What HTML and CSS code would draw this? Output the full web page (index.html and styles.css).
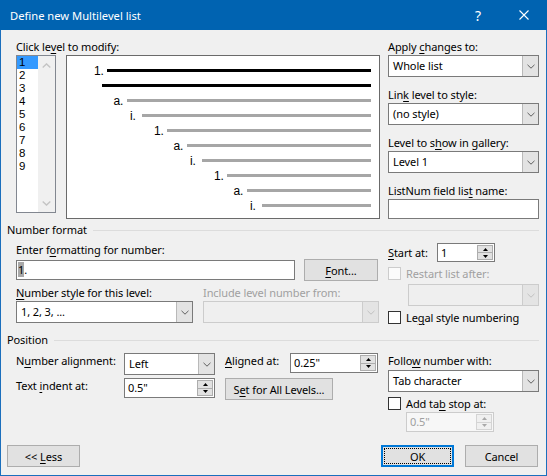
FILE: index.html
```html
<!DOCTYPE html>
<html>
<head>
<meta charset="utf-8">
<title>Define new Multilevel list</title>
<link rel="stylesheet" href="styles.css">
</head>
<body>
<div class="window">
  <div class="titlebar">
    <span class="title">Define new Multilevel list</span>
    <span class="tb-btn help">?</span>
    <span class="tb-btn close"><svg width="10" height="10" viewBox="0 0 10 10"><path d="M0.5 0.5L9.5 9.5M9.5 0.5L0.5 9.5" stroke="#fff" stroke-width="1.1" fill="none"/></svg></span>
  </div>
  <div class="body">
    <div class="top">
      <div class="top-left">
        <div class="lbl">Click le<u>v</u>el to modify:</div>
        <div class="top-row">
          <div class="listbox">
            <div class="items">
              <div class="item sel">1</div>
              <div class="item">2</div>
              <div class="item">3</div>
              <div class="item">4</div>
              <div class="item">5</div>
              <div class="item">6</div>
              <div class="item">7</div>
              <div class="item">8</div>
              <div class="item">9</div>
            </div>
            <div class="vscroll">
              <svg width="9" height="5" viewBox="0 0 9 5"><path d="M0.7 4.4L4.5 0.9L8.3 4.4" fill="none" stroke="#c4c4c4" stroke-width="1.4"/></svg>
              <svg width="9" height="5" viewBox="0 0 9 5"><path d="M0.7 0.6L4.5 4.1L8.3 0.6" fill="none" stroke="#c4c4c4" stroke-width="1.4"/></svg>
            </div>
          </div>
          <div class="preview">
            <svg width="312" height="162" viewBox="0 0 312 162">
              <g font-family="Liberation Sans, Arial, sans-serif" font-size="12" fill="#000">
                <text x="27" y="19">1.</text>
                <text x="46.5" y="49">a.</text>
                <text x="63" y="64">i.</text>
                <text x="87" y="79">1.</text>
                <text x="106.5" y="94">a.</text>
                <text x="123" y="109">i.</text>
                <text x="147" y="124">1.</text>
                <text x="166.5" y="139">a.</text>
                <text x="183" y="154">i.</text>
              </g>
              <rect x="40" y="13" width="264" height="3" fill="#000"/>
              <rect x="35" y="28" width="269" height="3" fill="#000"/>
              <g fill="#a6a6a6">
                <rect x="60" y="43" width="244" height="3"/>
                <rect x="75" y="58" width="229" height="3"/>
                <rect x="100" y="73" width="204" height="3"/>
                <rect x="120" y="88" width="184" height="3"/>
                <rect x="135" y="103" width="169" height="3"/>
                <rect x="160" y="118" width="144" height="3"/>
                <rect x="180" y="133" width="124" height="3"/>
                <rect x="195" y="148" width="109" height="3"/>
              </g>
            </svg>
          </div>
        </div>
      </div>
      <div class="side">
        <div class="lbl">Apply <u>c</u>hanges to:</div>
        <div class="combo"><span class="ctext">Whole list</span><span class="dd"><svg width="8" height="5" viewBox="0 0 8 5"><path d="M0.5 0.8L4 4.2L7.5 0.8" fill="none" stroke="#606060" stroke-width="1"/></svg></span></div>
        <div class="lbl mt10">Lin<u>k</u> level to style:</div>
        <div class="combo"><span class="ctext">(no style)</span><span class="dd"><svg width="8" height="5" viewBox="0 0 8 5"><path d="M0.5 0.8L4 4.2L7.5 0.8" fill="none" stroke="#606060" stroke-width="1"/></svg></span></div>
        <div class="lbl mt10">Level to s<u>h</u>ow in gallery:</div>
        <div class="combo"><span class="ctext">Level 1</span><span class="dd"><svg width="8" height="5" viewBox="0 0 8 5"><path d="M0.5 0.8L4 4.2L7.5 0.8" fill="none" stroke="#606060" stroke-width="1"/></svg></span></div>
        <div class="lbl mt10">ListNum field lis<u>t</u> name:</div>
        <div class="edit"></div>
      </div>
    </div>

    <div class="group"><span>Number format</span></div>
    <div class="sec">
      <div class="sec-left">
        <div class="lbl mt4">Enter f<u>o</u>rmatting for number:</div>
        <div class="row mt1">
          <div class="edit fmt"><span class="shade">1</span>.</div>
          <div class="btn font-btn"><span><u>F</u>ont...</span></div>
        </div>
        <div class="row mt4">
          <div class="lbl w187"><u>N</u>umber style for this level:</div>
          <div class="lbl dis-text">Include level number from:</div>
        </div>
        <div class="row">
          <div class="combo w177"><span class="ctext">1, 2, 3, ...</span><span class="dd"><svg width="8" height="5" viewBox="0 0 8 5"><path d="M0.5 0.8L4 4.2L7.5 0.8" fill="none" stroke="#606060" stroke-width="1"/></svg></span></div>
          <div class="combo dis w176"><span class="ctext"></span><span class="dd"><svg width="8" height="5" viewBox="0 0 8 5"><path d="M0.5 0.8L4 4.2L7.5 0.8" fill="none" stroke="#c0c0c0" stroke-width="1"/></svg></span></div>
        </div>
      </div>
      <div class="sec-right">
        <div class="row start">
          <span class="lbl start-lbl"><u>S</u>tart at:</span>
          <div class="spin w58"><span class="stext">1</span><span class="sbtns"><span><svg width="5" height="3" viewBox="0 0 5 3"><polygon points="0,3 2.5,0 5,3" fill="#000"/></svg></span><span><svg width="5" height="3" viewBox="0 0 5 3"><polygon points="0,0 2.5,3 5,0" fill="#000"/></svg></span></span></div>
        </div>
        <div class="check dis restart"><span class="cb"></span><span>Restart list after:</span></div>
        <div class="combo dis restart-combo"><span class="ctext"></span><span class="dd"><svg width="8" height="5" viewBox="0 0 8 5"><path d="M0.5 0.8L4 4.2L7.5 0.8" fill="none" stroke="#c0c0c0" stroke-width="1"/></svg></span></div>
        <div class="check legal"><span class="cb"></span><span>Le<u>g</u>al style numbering</span></div>
      </div>
    </div>

    <div class="group mt8"><span>Position</span></div>
    <div class="sec">
      <div class="sec-left">
        <div class="pos-grid">
          <div class="lbl">N<u>u</u>mber alignment:</div>
          <div class="combo"><span class="ctext">Left</span><span class="dd"><svg width="8" height="5" viewBox="0 0 8 5"><path d="M0.5 0.8L4 4.2L7.5 0.8" fill="none" stroke="#606060" stroke-width="1"/></svg></span></div>
          <div class="lbl pl10"><u>A</u>ligned at:</div>
          <div class="spin"><span class="stext">0.25"</span><span class="sbtns"><span><svg width="5" height="3" viewBox="0 0 5 3"><polygon points="0,3 2.5,0 5,3" fill="#000"/></svg></span><span><svg width="5" height="3" viewBox="0 0 5 3"><polygon points="0,0 2.5,3 5,0" fill="#000"/></svg></span></span></div>
          <div class="lbl">Text <u>i</u>ndent at:</div>
          <div class="spin"><span class="stext">0.5"</span><span class="sbtns"><span><svg width="5" height="3" viewBox="0 0 5 3"><polygon points="0,3 2.5,0 5,3" fill="#000"/></svg></span><span><svg width="5" height="3" viewBox="0 0 5 3"><polygon points="0,0 2.5,3 5,0" fill="#000"/></svg></span></span></div>
          <div class="btn setall"><span>S<u>e</u>t for All Levels...</span></div>
        </div>
      </div>
      <div class="sec-right pos-right">
        <div class="lbl">Follo<u>w</u> number with:</div>
        <div class="combo mt1"><span class="ctext">Tab character</span><span class="dd"><svg width="8" height="5" viewBox="0 0 8 5"><path d="M0.5 0.8L4 4.2L7.5 0.8" fill="none" stroke="#606060" stroke-width="1"/></svg></span></div>
        <div class="check addtab"><span class="cb"></span><span>Add ta<u>b</u> stop at:</span></div>
        <div class="spin spin-dis"><span class="stext">0.5"</span><span class="sbtns"><span><svg width="5" height="3" viewBox="0 0 5 3"><polygon points="0,3 2.5,0 5,3" fill="#a8a8a8"/></svg></span><span><svg width="5" height="3" viewBox="0 0 5 3"><polygon points="0,0 2.5,3 5,0" fill="#a8a8a8"/></svg></span></span></div>
      </div>
    </div>

    <div class="buttons">
      <div class="btn less"><span>&lt;&lt; <u>L</u>ess</span></div>
      <div class="btn ok"><span class="focus">OK</span></div>
      <div class="btn cancel"><span>Cancel</span></div>
    </div>
  </div>
</div>
</body>
</html>
```
FILE: styles.css
```css
* { box-sizing: border-box; }
html, body { margin: 0; padding: 0; }
body {
  width: 547px;
  height: 476px;
  overflow: hidden;
  background: #f0f0f0;
  font-family: "Noto Sans", "Open Sans", sans-serif;
  font-size: 11px;
  letter-spacing: -0.1px;
  color: #000;
}
u { text-underline-offset: 2px; }

.window {
  width: 547px;
  height: 476px;
  border: 1px solid #1b6fbd;
  border-top: none;
  display: flex;
  flex-direction: column;
  background: #f0f0f0;
}
.titlebar {
  flex: none;
  height: 30px;
  margin: 0 -1px;
  background: #0063b1;
  color: #fff;
  display: flex;
  align-items: center;
  padding-left: 10px;
}
.title { flex: 1; font-size: 11.2px; letter-spacing: 0; }
.tb-btn {
  width: 46px;
  height: 30px;
  display: flex;
  align-items: center;
  justify-content: center;
}
.help { font-size: 14px; }

.body {
  flex: 1;
  display: flex;
  flex-direction: column;
  padding: 9px 7px 8px 6px;
}

.lbl { height: 16px; line-height: 16px; white-space: nowrap; }
.mt1 { margin-top: 1px; }
.mt4 { margin-top: 4px; }
.mt10 { margin-top: 10px; }
.pl10 { padding-left: 10px; }

/* top area */
.top { display: flex; padding-left: 9px; }
.top-left { width: 364px; }
.top-row { display: flex; align-items: flex-start; }
.listbox {
  width: 40px;
  height: 158px;
  border: 1px solid #828790;
  background: #fff;
  display: flex;
}
.items { width: 21px; }
.item {
  height: 13px;
  line-height: 13px;
  padding-left: 2px;
  font-family: "Liberation Sans", Arial, sans-serif;
  font-size: 11.5px;
  letter-spacing: 0;
}
.item.sel { background: #3399ff; }
.vscroll {
  width: 17px;
  background: #f0f0f0;
  display: flex;
  flex-direction: column;
  justify-content: space-between;
  align-items: center;
  padding: 7px 0 6px;
}
.vscroll svg { display: block; }
.preview {
  margin-left: 10px;
  width: 314px;
  height: 164px;
  border: 1px solid #6a6a6a;
  background: #fff;
}
.preview svg { display: block; }

.side { margin-left: 8px; width: 151px; }

/* controls */
.combo {
  display: flex;
  height: 22px;
  border: 1px solid #7a7a7a;
  background: #fff;
}
.ctext {
  flex: 1;
  padding-left: 4px;
  line-height: 20px;
  white-space: nowrap;
  overflow: hidden;
}
.dd {
  width: 16px;
  flex: none;
  background: #e3e3e3;
  border-left: 1px solid #b9b9b9;
  display: flex;
  align-items: center;
  justify-content: center;
}
.combo.dis { border-color: #cccccc; background: #efefef; }
.combo.dis .dd { background: #e4e4e4; border-left-color: #cccccc; }

.edit {
  height: 20px;
  border: 1px solid #7a7a7a;
  background: #fff;
}
.btn {
  height: 22px;
  border: 1px solid #adadad;
  background: #e1e1e1;
  display: flex;
  align-items: center;
  justify-content: center;
  white-space: nowrap;
}
.spin {
  display: flex;
  height: 20px;
  border: 1px solid #7a7a7a;
  background: #fff;
}
.stext { flex: 1; padding-left: 3px; line-height: 18px; white-space: nowrap; }
.sbtns {
  width: 17px;
  flex: none;
  display: flex;
  flex-direction: column;
  padding: 1px 1px 1px 0;
}
.sbtns span {
  flex: 1;
  background: #e1e1e1;
  border: 1px solid #adadad;
  display: flex;
  align-items: center;
  justify-content: center;
}
.sbtns span + span { border-top: none; }
.sbtns svg { display: block; }

.check { display: flex; align-items: center; height: 13px; white-space: nowrap; }
.cb {
  width: 13px;
  height: 13px;
  flex: none;
  border: 1px solid #333;
  background: #fff;
  margin-right: 5px;
}
.check.dis { color: #a0a0a0; }
.check.dis .cb { border-color: #cccccc; background: #fbfbfb; }
.dis-text { color: #a0a0a0; }

/* group headers */
.group {
  display: flex;
  align-items: center;
  height: 16px;
  line-height: 16px;
  margin-top: 3px;
  white-space: nowrap;
}
.group::after {
  content: "";
  flex: 1;
  height: 1px;
  background: #dcdcdc;
  margin-left: 6px;
}
.group.mt8 { margin-top: 8px; }

.sec { display: flex; padding-left: 9px; }
.sec-left { width: 363px; }
.sec-right { margin-left: 9px; width: 151px; }
.row { display: flex; align-items: center; }

/* number format */
.fmt { width: 279px; padding-left: 1px; line-height: 18px; }
.shade { background: #a8a8a8; }
.font-btn { width: 74px; margin-left: 9px; }
.w187 { width: 187px; }
.w177 { width: 177px; }
.w176 { width: 176px; margin-left: 10px; }

.start { margin-top: 5px; }
.start-lbl { width: 49px; }
.w58 { width: 58px; height: 19px; }
.w58 .stext { line-height: 17px; }
.restart { margin-top: 5px; }
.restart-combo { margin-top: 4px; margin-left: 20px; width: 131px; }
.legal { margin-top: 5px; }

/* position */
.pos-grid {
  display: grid;
  grid-template-columns: 108px 91px 75px 88px;
  grid-template-rows: 22px 22px;
  row-gap: 3px;
  align-items: start;
  margin-top: 5px;
}
.setall { grid-column: 3 / 5; margin-left: 10px; width: 108px; }
.pos-right { margin-top: 5px; }
.addtab { margin-top: 5px; }
.spin-dis {
  margin-top: 2px;
  margin-left: 18px;
  width: 88px;
  border-color: #cccccc;
  background: #f7f7f7;
  color: #a0a0a0;
}
.spin-dis .sbtns span { background: #f0f0f0; border-color: #d4d4d4; }

/* bottom buttons */
.buttons { display: flex; margin-top: auto; }
.less { width: 73px; }
.ok {
  margin-left: auto;
  width: 73px;
  border: 2px solid #0078d7;
  padding: 1px;
  align-items: stretch;
}
.ok .focus {
  flex: 1;
  border: 1px dotted #000;
  display: flex;
  align-items: center;
  justify-content: center;
}
.cancel { width: 73px; margin-left: 11px; margin-right: 1px; }
```
